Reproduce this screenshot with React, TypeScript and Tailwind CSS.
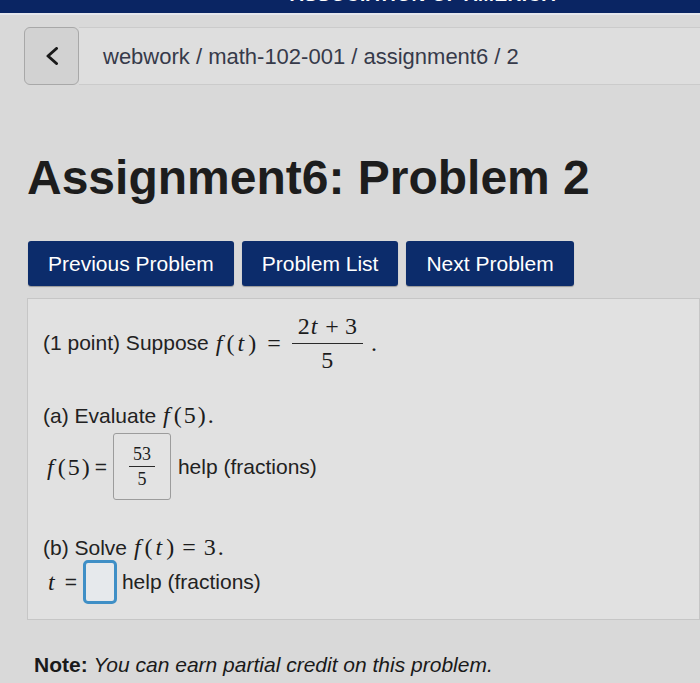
import React from 'react'

const SANS = "font-['Liberation_Sans',Arial,sans-serif]"
const SERIF = "font-['Liberation_Serif','Times_New_Roman',serif]"

function Frac({ num, den, size }: { num: React.ReactNode; den: React.ReactNode; size: 'lg' | 'sm' }) {
  const text = size === 'lg' ? 'text-[24px] leading-[24px]' : 'text-[18px] leading-[18px]'
  return (
    <span className={`inline-flex flex-col items-center ${SERIF} ${text} text-[#1c1c1c]`}>
      <span className={size === 'lg' ? 'px-[6px] pb-[5px]' : 'px-[4px] pb-[3px]'}>{num}</span>
      <span className="h-px w-full bg-[#2a2a2a]" />
      <span className={size === 'lg' ? 'pt-[4px]' : 'pt-[3px]'}>{den}</span>
    </span>
  )
}

// math run, spaced out a little like MathJax's TeX fonts
function M({ children, className = '' }: { children: React.ReactNode; className?: string }) {
  return <span className={`${SERIF} text-[24px] tracking-[2px] text-[#1c1c1c] ${className}`}>{children}</span>
}

function V({ children }: { children: React.ReactNode }) {
  return <i className="pl-[1px] pr-[2px] italic">{children}</i>
}

export default function App() {
  return (
    <div className={`min-h-[683px] w-[700px] overflow-hidden bg-[#d9d9d9] ${SANS}`}>
      {/* top banner, mostly scrolled off */}
      <div className="h-[13px] overflow-hidden bg-[#0a2563]">
        <div className="-mt-[14px] whitespace-nowrap pl-[290px] text-[19px] font-bold leading-[18px] tracking-wide text-white">
          ASSOCIATION OF AMERICA
        </div>
      </div>
      <div className="h-[2px] bg-[#e4e6ec]" />

      <div className="mt-3 flex pl-[24px]">
        <button className="flex h-[58px] w-[55px] items-center justify-center rounded-md border border-[#a8a8a8] bg-[#d2d2d2]">
          <svg width="14" height="18" viewBox="0 0 14 18" fill="none">
            <polyline points="11.5,1.5 3,9 11.5,16.5" stroke="#1a1a1a" strokeWidth="3" strokeLinecap="round" strokeLinejoin="round" />
          </svg>
        </button>
        <div className="flex h-[58px] flex-1 items-center border-y border-[#cbcbcb] bg-[#dedede] pl-[24px] text-[22px] text-[#363a4a]">
          webwork / math-102-001 / assignment6 / 2
        </div>
      </div>

      <h1 className="mt-[65px] pl-[27px] text-[48px] font-bold leading-[56px] text-[#1d1d1d]">
        Assignment6: Problem 2
      </h1>

      <div className="mt-[35px] flex gap-2 pl-[28px]">
        {['Previous Problem', 'Problem List', 'Next Problem'].map(label => (
          <button
            key={label}
            className="h-[45px] rounded-[3px] bg-[#0c2c6b] px-5 text-[21px] text-white shadow-[0_1px_1px_rgba(0,0,0,0.3)]"
          >
            {label}
          </button>
        ))}
      </div>

      <div className="ml-[27px] mt-3 border border-[#c6c6c6] bg-[#e1e1e1] p-[15px] text-[21px] leading-[26px] text-[#222]">
        <div className="flex items-center">
          <span className="mr-[6px]">(1 point) Suppose</span>
          <M>
            <V>f</V>(<V>t</V>)
          </M>
          <M className="ml-[9px] mr-[11px] tracking-normal">=</M>
          <Frac
            size="lg"
            num={
              <>
                2<V>t</V> + 3
              </>
            }
            den="5"
          />
          <M className="ml-[8px]">.</M>
        </div>

        <div className="mt-[30px]">
          (a) Evaluate{' '}
          <M>
            <V>f</V>(5).
          </M>
        </div>

        <div className="mt-[4px] flex items-center">
          <M className="ml-[3px]">
            <V>f</V>(5)
          </M>
          <span className="ml-[3px]">=</span>
          <span className="ml-[6px] flex h-[67px] w-[58px] items-center justify-center rounded-[3px] border border-[#9c9c9c] bg-[#e3e3e3]">
            <Frac size="sm" num="53" den="5" />
          </span>
          <span className="ml-[7px]">help (fractions)</span>
        </div>

        <div className="mt-[34px]">
          (b) Solve{' '}
          <M>
            <V>f</V>(<V>t</V>)
          </M>
          <M className="ml-[6px] mr-[8px] tracking-normal">=</M>
          <M>3.</M>
        </div>

        <div className="-mt-[1px] flex items-center">
          <M className="ml-[4px]">
            <V>t</V>
          </M>
          <span className="ml-[6px]">=</span>
          <span className="ml-[6px] h-[44px] w-[34px] rounded-[5px] border-[3px] border-[#3f8fc6] bg-[#e6e9ec]" />
          <span className="ml-[5px]">help (fractions)</span>
        </div>
      </div>

      <div className="mt-[32px] pl-[34px] text-[21px] leading-[26px] text-[#1a1a1a]">
        <b className="font-bold">Note:</b> <i className="italic">You can earn partial credit on this problem.</i>
      </div>
    </div>
  )
}
